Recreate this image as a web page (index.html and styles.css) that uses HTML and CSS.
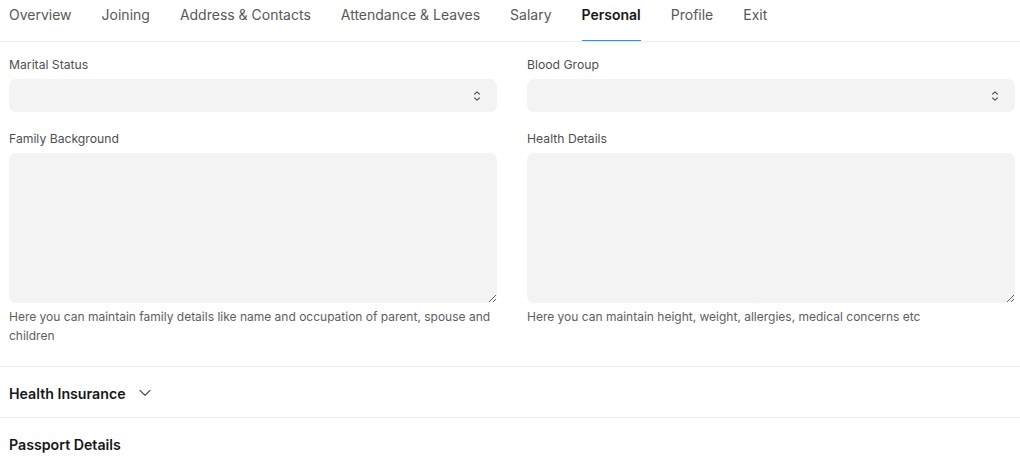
FILE: index.html
```html
<!DOCTYPE html>
<html>
<head>
<meta charset="utf-8">
<link rel="stylesheet" href="styles.css">
</head>
<body>
<nav class="tabs">
  <a class="tab">Overview</a>
  <a class="tab">Joining</a>
  <a class="tab">Address &amp; Contacts</a>
  <a class="tab">Attendance &amp; Leaves</a>
  <a class="tab">Salary</a>
  <a class="tab active">Personal</a>
  <a class="tab">Profile</a>
  <a class="tab">Exit</a>
</nav>

<section class="form-section">
  <div class="col">
    <div class="field">
      <label class="label">Marital Status</label>
      <div class="select">
        <svg class="caret" width="8" height="12" viewBox="0 0 8 12"><path d="M1.5 4.2 L4 1.8 L6.5 4.2 M1.5 7.8 L4 10.2 L6.5 7.8" fill="none" stroke="#4a4a4a" stroke-width="1.1" stroke-linecap="round" stroke-linejoin="round"/></svg>
      </div>
    </div>
    <div class="field">
      <label class="label">Family Background</label>
      <textarea class="textarea"></textarea>
      <p class="desc">Here you can maintain family details like name and occupation of parent, spouse and children</p>
    </div>
  </div>
  <div class="col">
    <div class="field">
      <label class="label">Blood Group</label>
      <div class="select">
        <svg class="caret" width="8" height="12" viewBox="0 0 8 12"><path d="M1.5 4.2 L4 1.8 L6.5 4.2 M1.5 7.8 L4 10.2 L6.5 7.8" fill="none" stroke="#4a4a4a" stroke-width="1.1" stroke-linecap="round" stroke-linejoin="round"/></svg>
      </div>
    </div>
    <div class="field">
      <label class="label">Health Details</label>
      <textarea class="textarea"></textarea>
      <p class="desc">Here you can maintain height, weight, allergies, medical concerns etc</p>
    </div>
  </div>
</section>

<section class="collapsible">
  <span class="section-title">Health Insurance</span>
  <svg class="chev" width="12" height="8" viewBox="0 0 12 8"><path d="M1 1.5 L6 6.3 L11 1.5" fill="none" stroke="#555" stroke-width="1.2" stroke-linecap="round" stroke-linejoin="round"/></svg>
</section>

<section class="collapsible">
  <span class="section-title">Passport Details</span>
</section>
</body>
</html>
```

FILE: styles.css
```css
* { box-sizing: border-box; }
html, body { margin: 0; padding: 0; background: #fff; }
body {
  font-family: Inter, "Noto Sans", sans-serif;
  color: #1f1f1f;
  width: 1020px;
  height: 461px;
  overflow: hidden;
}

.tabs {
  display: flex;
  gap: 30px;
  padding: 0 9px;
  border-bottom: 1px solid #ededed;
  height: 42px;
}
.tab {
  font-size: 14px;
  line-height: 20px;
  color: #585858;
  padding-top: 5px;
  height: 41px;
  border-bottom: 1px solid transparent;
  white-space: nowrap;
}
.tab.active {
  color: #171717;
  font-weight: 600;
  border-bottom-color: #2490ef;
}

.form-section {
  display: grid;
  grid-template-columns: 488px 488px;
  column-gap: 30px;
  padding: 15px 6px 21px 9px;
  border-bottom: 1px solid #ededed;
}
.col { display: flex; flex-direction: column; gap: 19px; }
.field { display: flex; flex-direction: column; }
.label {
  font-size: 12.2px;
  line-height: 16px;
  color: #4f4f4f;
  margin-bottom: 6px;
}
.select {
  height: 33px;
  background: #f3f3f3;
  border-radius: 7px;
  display: flex;
  align-items: center;
  justify-content: flex-end;
  padding-right: 16px;
}
.caret { display: block; }
.textarea {
  display: block;
  width: 100%;
  height: 150px;
  background: #f3f3f3;
  border: none;
  border-radius: 7px;
  resize: vertical;
  font-family: inherit;
  margin: 0;
  outline: none;
}
.desc {
  margin: 4px 0 0;
  font-size: 12px;
  line-height: 19px;
  color: #5e5e5e;
}

.collapsible {
  display: flex;
  align-items: center;
  gap: 13px;
  height: 51px;
  padding: 2px 9px 0;
  border-bottom: 1px solid #ededed;
}
.section-title {
  font-size: 14.2px;
  font-weight: 600;
  color: #171717;
}
.chev { display: block; }
```
